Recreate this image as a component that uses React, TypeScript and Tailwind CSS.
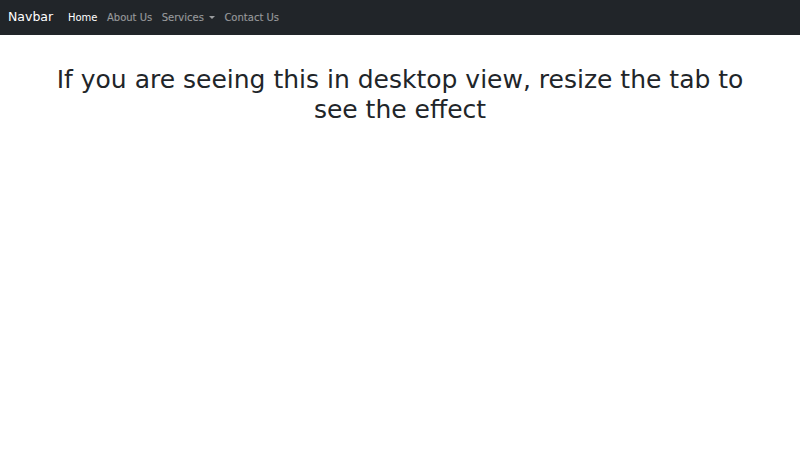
import React from 'react';

const links = [
  { label: 'Home', active: true },
  { label: 'About Us' },
  { label: 'Services', caret: true },
  { label: 'Contact Us' },
];

const App: React.FC = () => {
  return (
    <div className="min-h-screen bg-white font-['DejaVu_Sans',sans-serif] text-[#212529]">
      <nav className="h-[35px] bg-[#212529] flex items-center px-2">
        <span className="text-white text-[12.5px] mr-[10px]">Navbar</span>
        <ul className="flex items-center">
          {links.map((l) => (
            <li key={l.label} className={`px-[4.75px] text-[10px] flex items-center ${l.active ? 'text-white' : 'text-white/55'}`}>
              {l.label}
              {l.caret && <span className="ml-[5px] w-0 h-0 border-x-[3px] border-x-transparent border-t-[3px] border-t-current"></span>}
            </li>
          ))}
        </ul>
      </nav>
      <h1 className="mt-[30px] mx-auto max-w-[720px] text-center text-[25px] leading-[30px]">
        If you are seeing this in desktop view, resize the tab to see the effect
      </h1>
    </div>
  );
};

export default App;
